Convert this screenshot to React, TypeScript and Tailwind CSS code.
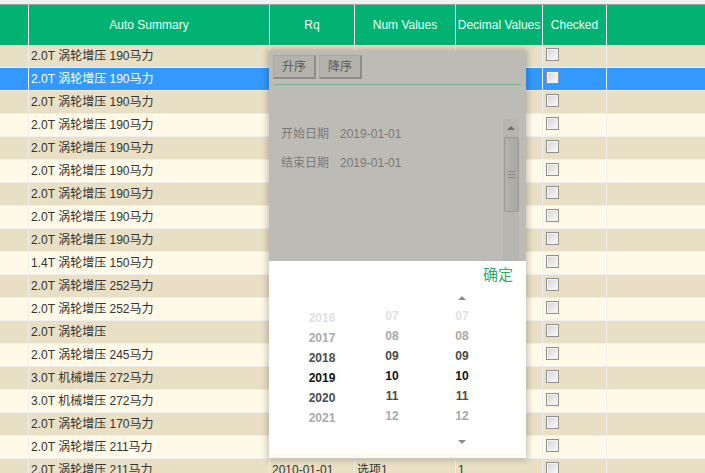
// App.tsx
// Tabela com cabeçalho verde e popup de filtro de datas

const rows: string[] = [
  '2.0T 涡轮增压 190马力',
  '2.0T 涡轮增压 190马力',
  '2.0T 涡轮增压 190马力',
  '2.0T 涡轮增压 190马力',
  '2.0T 涡轮增压 190马力',
  '2.0T 涡轮增压 190马力',
  '2.0T 涡轮增压 190马力',
  '2.0T 涡轮增压 190马力',
  '2.0T 涡轮增压 190马力',
  '1.4T 涡轮增压 150马力',
  '2.0T 涡轮增压 252马力',
  '2.0T 涡轮增压 252马力',
  '2.0T 涡轮增压',
  '2.0T 涡轮增压 245马力',
  '3.0T 机械增压 272马力',
  '3.0T 机械增压 272马力',
  '2.0T 涡轮增压 170马力',
  '2.0T 涡轮增压 211马力',
  '2.0T 涡轮增压 211马力',
];

const SELECTED = 1;

const wheelColors = ['text-[#e0e0e0]', 'text-[#a9a9a9]', 'text-[#4a4a4a]', 'text-[#111111]', 'text-[#4a4a4a]', 'text-[#a9a9a9]'];

function Checkbox() {
  return (
    <div className="mt-[3px] ml-[1px] w-[13px] h-[13px] border border-[#8f8f8f] bg-gradient-to-br from-[#d4d4d6] to-[#fbfbfb] shadow-[inset_0_0_0_1px_#f4f4f4]" />
  );
}

function Header() {
  const cell = 'h-full flex items-center justify-center border-r border-white';
  return (
    <div className="flex h-[40px] bg-[#01b273] text-[12px] text-[#eafff3]">
      <div className={`${cell} w-[29px]`} />
      <div className={`${cell} w-[241px]`}>Auto Summary</div>
      <div className={`${cell} w-[85px]`}>Rq</div>
      <div className={`${cell} w-[101px]`}>Num Values</div>
      <div className={`${cell} w-[87px]`}>Decimal Values</div>
      <div className={`${cell} w-[64px]`}>Checked</div>
      <div className="flex-1" />
    </div>
  );
}

function Row({ label, index }: { label: string; index: number }) {
  const selected = index === SELECTED;
  // só a última linha aparece por baixo do popup
  const showData = index === rows.length - 1;
  const bg = selected ? 'bg-[#3399ff] text-white' : index % 2 === 0 ? 'bg-[#e8dfc5] text-[#333]' : 'bg-[#fff9e8] text-[#333]';
  const cell = 'h-full border-r border-[#eeeeee] pl-[2px] whitespace-nowrap overflow-hidden';
  return (
    <div className={`flex h-[23px] border-b border-[#eeeeee] leading-[22px] text-[12px] ${bg}`}>
      <div className={`${cell} w-[29px]`} />
      <div className={`${cell} w-[241px]`}>{label}</div>
      <div className={`${cell} w-[85px]`}>{showData && '2010-01-01'}</div>
      <div className={`${cell} w-[101px]`}>{showData && '选项1'}</div>
      <div className={`${cell} w-[87px]`}>{showData && '1'}</div>
      <div className={`${cell} w-[64px]`}>
        <Checkbox />
      </div>
      <div className="flex-1" />
    </div>
  );
}

function Triangle({ down }: { down?: boolean }) {
  return (
    <div
      className={
        down
          ? 'w-0 h-0 border-l-[4px] border-r-[4px] border-t-[4px] border-l-transparent border-r-transparent border-t-[#8b8b99]'
          : 'w-0 h-0 border-l-[4px] border-r-[4px] border-b-[4px] border-l-transparent border-r-transparent border-b-[#8b8b99]'
      }
    />
  );
}

function FilterPopup() {
  const years = ['2016', '2017', '2018', '2019', '2020', '2021'];
  const months = ['07', '08', '09', '10', '11', '12'];

  return (
    <div className="absolute left-[269px] top-[51px] w-[257px] shadow-[0_0_6px_2px_rgba(0,0,0,0.22)]">
      {/* parte escurecida (máscara) */}
      <div className="h-[210px] bg-[#bdbbb6]">
        <div className="flex gap-[3px] pl-[4px] pt-[4px]">
          {['升序', '降序'].map((t) => (
            <div
              key={t}
              className="w-[43px] h-[24px] flex items-center justify-center bg-[#b4b2ad] border border-[#a9a7a2] border-r-2 border-b-2 border-r-[#8e8c88] border-b-[#8e8c88] text-[12px] text-[#5b5956]"
            >
              {t}
            </div>
          ))}
        </div>
        <div className="mx-[5px] mt-[5px] h-px bg-[#79ae8d]" />
        <div className="mt-[34px] flex pl-[12px] pr-[7px] h-[142px]">
          <div className="flex-1 pt-[1px] text-[12px] leading-[29px] text-[#7b7976]">
            <div className="flex gap-[11px]">
              <span>开始日期</span>
              <span>2019-01-01</span>
            </div>
            <div className="flex gap-[11px]">
              <span>结束日期</span>
              <span>2019-01-01</span>
            </div>
          </div>
          <div className="w-[16px] h-full bg-[#b6b5b1] flex flex-col items-center">
            <div className="h-[18px] flex items-center justify-center">
              <div className="w-0 h-0 border-l-[4px] border-r-[4px] border-b-[4px] border-l-transparent border-r-transparent border-b-[#6f6e6b]" />
            </div>
            <div className="w-[15px] h-[75px] rounded-[2px] border border-[#999893] bg-gradient-to-r from-[#b3b2ae] via-[#aeada9] to-[#a8a7a3] flex flex-col items-center justify-center gap-[2px]">
              <div className="w-[7px] h-px bg-[#8a8985]" />
              <div className="w-[7px] h-px bg-[#8a8985]" />
              <div className="w-[7px] h-px bg-[#8a8985]" />
            </div>
          </div>
        </div>
      </div>

      {/* seletor de data */}
      <div className="h-[192px] bg-white">
        <div className="h-[28px] flex items-center justify-end pr-[13px] text-[15px] text-[#33aa5f]">确定</div>
        <div className="flex pl-[18px] text-[12px] font-bold leading-[20px]">
          <div className="w-[70px] pt-[19px] flex flex-col items-center">
            {years.map((y, i) => (
              <div key={y} className={wheelColors[i]}>{y}</div>
            ))}
          </div>
          <div className="w-[70px] pt-[17px] flex flex-col items-center">
            {months.map((m, i) => (
              <div key={m} className={wheelColors[i]}>{m}</div>
            ))}
          </div>
          <div className="w-[70px] flex flex-col items-center">
            <div className="h-[17px] flex items-end pb-[6px]">
              <Triangle />
            </div>
            {months.map((m, i) => (
              <div key={m} className={wheelColors[i]}>{m}</div>
            ))}
            <div className="mt-[14px]">
              <Triangle down />
            </div>
          </div>
        </div>
      </div>
      <div className="h-[5px] bg-[#fff9e8]" />
    </div>
  );
}

export default function App() {
  return (
    <div className="relative w-[705px] h-[473px] overflow-hidden bg-[#f0f0f0] font-['Liberation_Sans','Noto_Sans_CJK_SC',sans-serif]">
      <div className="h-[4px] bg-[#f0f0f0]" />
      <div className="h-px bg-[#a0a0a0]" />
      <Header />
      {rows.map((r, i) => (
        <Row key={i} label={r} index={i} />
      ))}
      <FilterPopup />
    </div>
  );
}
